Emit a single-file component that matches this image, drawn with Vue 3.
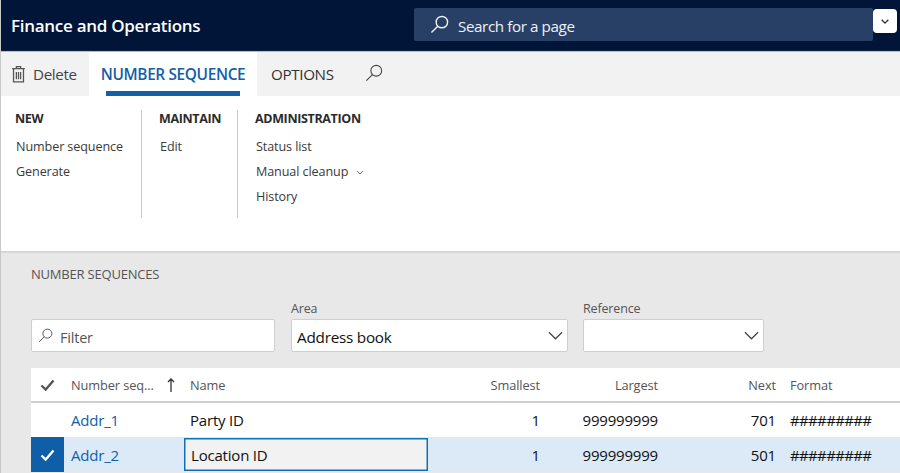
<template>
  <div class="page">
    <header class="topbar">
      <div class="brand">Finance and Operations</div>
      <div class="search">
        <svg class="search-icon" viewBox="0 0 20 20"><circle cx="12.5" cy="7.5" r="6" /><path d="M8.2 11.8 1.5 18.5" /></svg>
        <span>Search for a page</span>
      </div>
      <button class="expand">
        <svg viewBox="0 0 12 8"><path d="M2 2l4 4 4-4" /></svg>
      </button>
    </header>

    <nav class="tabs">
      <div class="delete">
        <svg viewBox="0 0 14 17"><path d="M1 3.5h12M5 3.5V1.500h4v2M2.300 3.500v12.500h9.400V3.500M5 6.500v7M7 6.500v7M9 6.500v7" /></svg>
        <span>Delete</span>
      </div>
      <div class="tab active"><span>NUMBER SEQUENCE</span></div>
      <div class="tab">OPTIONS</div>
      <svg class="tab-search" viewBox="0 0 20 20"><circle cx="12.500" cy="7.500" r="6" /><path d="M8.200 11.800 1.500 18.500" /></svg>
    </nav>

    <section class="ribbon">
      <div v-for="group in groups" :key="group.title" class="group" :class="group.cls">
        <h3>{{ group.title }}</h3>
        <a v-for="item in group.items" :key="item">
          {{ item }}
          <svg v-if="item === 'Manual cleanup'" viewBox="0 0 10 6"><path d="M1 1l4 4 4-4" /></svg>
        </a>
      </div>
    </section>

    <main class="content">
      <div class="title">NUMBER SEQUENCES</div>
      <div class="filters">
        <div class="filter-box">
          <svg viewBox="0 0 20 20"><circle cx="12.500" cy="7.500" r="6" /><path d="M8.200 11.800 1.500 18.500" /></svg>
          <span>Filter</span>
        </div>
        <div class="field area">
          <label>Area</label>
          <div class="select">
            <span>Address book</span>
            <svg viewBox="0 0 16 9"><path d="M1 1l7 7 7-7" /></svg>
          </div>
        </div>
        <div class="field reference">
          <label>Reference</label>
          <div class="select">
            <span></span>
            <svg viewBox="0 0 16 9"><path d="M1 1l7 7 7-7" /></svg>
          </div>
        </div>
      </div>

      <div class="grid">
        <div class="row head">
          <div class="check">
            <svg viewBox="0 0 16 13"><path d="M1.500 7l4.500 4.500 8.500-10" /></svg>
          </div>
          <div class="c-num">
            <span>Number seq...</span>
            <svg class="arrow" viewBox="0 0 8 14"><path d="M4 14V1M1 4l3-3 3 3" /></svg>
          </div>
          <div class="c-name">Name</div>
          <div class="c-right">Smallest</div>
          <div class="c-right">Largest</div>
          <div class="c-right">Next</div>
          <div class="c-format">Format</div>
        </div>
        <div v-for="row in rows" :key="row.id" class="row" :class="{ selected: row.selected }">
          <div class="check">
            <svg v-if="row.selected" viewBox="0 0 16 13"><path d="M1.500 7l4.500 4.500 8.500-10" /></svg>
          </div>
          <div class="c-num link">{{ row.id }}</div>
          <div class="c-name"><span :class="{ edit: row.selected }">{{ row.name }}</span></div>
          <div class="c-right">{{ row.smallest }}</div>
          <div class="c-right">{{ row.largest }}</div>
          <div class="c-right">{{ row.next }}</div>
          <div class="c-format hash">{{ row.format }}</div>
        </div>
      </div>
    </main>
  </div>
</template>

<script setup>
const groups = [
  { title: 'NEW', cls: 'g-new', items: ['Number sequence', 'Generate'] },
  { title: 'MAINTAIN', cls: 'g-maintain', items: ['Edit'] },
  { title: 'ADMINISTRATION', cls: 'g-admin', items: ['Status list', 'Manual cleanup', 'History'] },
]

const rows = [
  { id: 'Addr_1', name: 'Party ID', smallest: 1, largest: 999999999, next: 701, format: '#########' },
  { id: 'Addr_2', name: 'Location ID', smallest: 1, largest: 999999999, next: 501, format: '#########', selected: true },
]
</script>

<style>
html, body {
  margin: 0;
  background: #e8e8e8;
}
</style>

<style scoped>
* {
  box-sizing: border-box;
}
svg {
  fill: none;
  stroke: currentColor;
  display: block;
}
.page {
  width: 900px;
  height: 473px;
  overflow: hidden;
  font-family: "Open Sans", "Noto Sans", sans-serif;
  color: #222;
  border-left: 1px solid #c8c8c8;
}

/* top bar */
.topbar {
  height: 51px;
  margin-left: -1px;
  background: #001537;
  border-bottom: 1px solid #101f3c;
  display: flex;
  align-items: flex-start;
  color: #fff;
}
.brand {
  width: 414px;
  padding: 15px 0 0 11px;
  font-size: 17px;
  font-weight: 600;
  letter-spacing: -0.28px;
  line-height: 22px;
}
.search {
  width: 459px;
  height: 33px;
  margin-top: 8px;
  background: #294066;
  border-radius: 2px;
  display: flex;
  align-items: center;
  padding: 3px 0 0 16px;
  font-size: 15.200px;
  letter-spacing: -0.4px;
  color: #eef1f6;
}
.search-icon {
  width: 19px;
  height: 19px;
  margin: -3px 9px 0 0;
  stroke-width: 1.500;
}
.expand {
  width: 24px;
  height: 24px;
  margin: 9px 0 0 0;
  padding: 0;
  border: 0;
  background: #fff;
  border-radius: 4px;
  color: #333;
  display: flex;
  align-items: center;
  justify-content: center;
}
.expand svg {
  width: 10px;
  height: 7px;
  stroke-width: 1.600;
}

/* tabs */
.tabs {
  height: 45px;
  margin-left: -1px;
  border-top: 1px solid #b9bcc2;
  background: #f2f2f2;
  display: flex;
  align-items: stretch;
  font-size: 15.200px;
  letter-spacing: -0.35px;
}
.delete {
  width: 89px;
  padding-left: 11px;
  display: flex;
  align-items: center;
  gap: 7px;
  color: #444;
}
.delete svg {
  width: 15px;
  height: 18px;
  stroke-width: 1.200;
  color: #555;
}
.tab {
  padding: 0 14px;
  display: flex;
  align-items: center;
  color: #333;
}
.tab.active {
  width: 168px;
  padding: 0;
  background: #fff;
  color: #1160a8;
  font-size: 15.400px;
  font-weight: 600;
  justify-content: center;
  position: relative;
}
.tab.active::after {
  content: "";
  position: absolute;
  left: 17px;
  right: 17px;
  bottom: 0;
  height: 5px;
  background: #1160a8;
}
.tab-search {
  width: 18px;
  height: 18px;
  margin: 12px 0 0 17px;
  stroke-width: 1.200;
  color: #444;
}

/* ribbon */
.ribbon {
  height: 157px;
  background: #fff;
  border-bottom: 2px solid #d6d6d6;
  padding-top: 14px;
  display: flex;
  align-items: flex-start;
  font-size: 12.600px;
  letter-spacing: -0.1px;
}
.group {
  height: 108px;
  padding-left: 17px;
  border-right: 1px solid #c9c9c9;
}
.g-new { width: 141px; padding-left: 14px; }
.g-maintain { width: 96px; }
.g-admin { border-right: 0; }
.group h3 {
  margin: 0 0 6px;
  font-size: 12.500px;
  font-weight: 700;
  letter-spacing: -0.35px;
  line-height: 18px;
  color: #2b2b2b;
}
.group a {
  display: flex;
  align-items: center;
  height: 25px;
  margin-left: 1px;
  color: #3a3a3a;
  white-space: pre;
}
.group a svg {
  width: 8px;
  height: 5px;
  margin: 2px 0 0 5px;
  stroke-width: 1.100;
  color: #555;
}

/* content */
.content {
  height: 220px;
  background: #e8e8e8;
  padding: 12px 0 0 30px;
}
.title {
  font-size: 13px;
  letter-spacing: -0.2px;
  line-height: 18px;
  color: #555;
}
.filters {
  margin-top: 18px;
  display: flex;
  align-items: flex-end;
}
.filter-box,
.select {
  height: 33px;
  padding-top: 2px;
  background: #fff;
  border: 1px solid #cfcfcf;
  border-radius: 2px;
  display: flex;
  align-items: center;
}
.filter-box {
  width: 244px;
  margin-right: 16px;
  padding-top: 4px;
  padding-left: 6px;
  font-size: 14.500px;
  letter-spacing: -0.2px;
  color: #555;
}
.filter-box svg {
  width: 15px;
  height: 15px;
  margin: -4px 7px 0 0;
  stroke-width: 1.300;
  color: #555;
}
.field label {
  display: block;
  font-size: 12.500px;
  letter-spacing: -0.15px;
  line-height: 16px;
  margin-bottom: 2px;
  color: #555;
}
.area { width: 277px; margin-right: 15px; }
.reference { width: 181px; }
.select {
  justify-content: space-between;
  padding-right: 4px;
  padding-left: 5px;
  font-size: 15.300px;
  letter-spacing: -0.25px;
  color: #111;
}
.select svg {
  width: 15px;
  height: 9px;
  margin-top: -2px;
  stroke-width: 1.300;
  color: #444;
}

/* grid */
.grid {
  margin-top: 16px;
  background: #fff;
}
.row {
  display: grid;
  grid-template-columns: 33px 119px 247px 111px 118px 118px 1fr;
  align-items: center;
  height: 34px;
  font-size: 15px;
  letter-spacing: -0.2px;
  color: #111;
}
.row.head {
  height: 35px;
  padding-top: 1px;
  border-bottom: 2px solid #d0d0d0;
  font-size: 12.800px;
  letter-spacing: -0.1px;
  color: #555;
}
.row.selected {
  height: 35px;
  background: #dceaf7;
}
.check {
  height: 100%;
  display: flex;
  align-items: center;
  justify-content: center;
  color: #555;
}
.check svg {
  width: 15px;
  height: 12px;
  stroke-width: 2.500;
}
.selected .check {
  background: #0f5ea8;
  color: #fff;
}
.c-num {
  padding-left: 7px;
  display: flex;
  align-items: center;
}
.arrow {
  width: 8px;
  height: 14px;
  margin: -1px 0 0 13px;
  stroke-width: 1.300;
  color: #333;
}
.link {
  color: #1160a8;
}
.c-name {
  padding-left: 7px;
}
.edit {
  display: flex;
  align-items: center;
  width: 244px;
  height: 33px;
  margin-left: -6px;
  padding-left: 6px;
  background: #f2f2f2;
  border: 1px solid #106ebe;
  box-shadow: inset 0 0 0 0.500px #106ebe;
}
.c-right {
  text-align: right;
  padding-right: 1px;
}
.c-format {
  padding-left: 13px;
}
.hash {
  letter-spacing: -0.65px;
}
</style>
